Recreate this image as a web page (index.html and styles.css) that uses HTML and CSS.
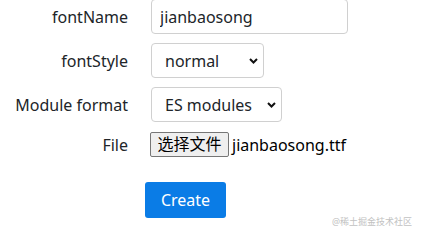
FILE: index.html
```html
<!doctype html>
<html>
	<head>
		<meta charset="UTF-8">
		<title>Font builder</title>
		<link rel="stylesheet" href="styles.css">
	</head>
<body>
	<form class="font-form">
		<div class="row">
			<label class="label">fontName</label>
			<input class="control text-input" type="text" value="jianbaosong">
		</div>
		<div class="row">
			<label class="label">fontStyle</label>
			<div class="control select style-select">
				<span>normal</span>
				<svg class="chevron" width="9" height="6" viewBox="0 0 9 6"><path d="M1 1l3.5 3.5L8 1" fill="none" stroke="#111" stroke-width="2"/></svg>
			</div>
		</div>
		<div class="row">
			<label class="label">Module format</label>
			<div class="control select module-select">
				<span>ES modules</span>
				<svg class="chevron" width="9" height="6" viewBox="0 0 9 6"><path d="M1 1l3.5 3.5L8 1" fill="none" stroke="#111" stroke-width="2"/></svg>
			</div>
		</div>
		<div class="row file-row">
			<label class="label">File</label>
			<div class="file">
				<span class="file-btn">选择文件</span>
				<span class="file-name">jianbaosong.ttf</span>
			</div>
		</div>
		<div class="actions">
			<button class="create" type="button">Create</button>
		</div>
	</form>
	<p class="watermark">@稀土掘金技术社区</p>
</body>
</html>
```

FILE: styles.css
```css
*{
	margin:0;
	padding:0;
	box-sizing:border-box;
}
body{
	background:#fff;
	color:#212529;
	font-family:"Noto Sans","Noto Sans CJK SC",sans-serif;
	font-size:16px;
	width:423px;
	height:234px;
	overflow:hidden;
	position:relative;
}
.font-form{
	margin-top:-1px;
}
.row{
	display:flex;
	align-items:center;
	height:35px;
	margin-bottom:9px;
}
.label{
	width:128px;
	margin-right:23px;
	text-align:right;
	line-height:20px;
}
.control{
	height:35px;
	border:1px solid #d0d0d0;
	border-radius:4px;
	background:#fff;
	font:inherit;
	color:#212529;
}
.text-input{
	width:197px;
	padding:0 8px;
	outline:none;
}
.select{
	display:flex;
	align-items:center;
	justify-content:space-between;
	padding:0 5px 0 13px;
}
.style-select{
	width:113px;
}
.module-select{
	width:131px;
}
.chevron{
	display:block;
	margin-top:1px;
}
.file-row{
	height:25px;
	margin-top:10px;
	margin-bottom:0;
}
.file{
	display:flex;
	align-items:center;
}
.file-btn{
	width:79px;
	height:25px;
	margin-left:-1px;
	border:1px solid #767676;
	border-radius:2px;
	background:#efefef;
	text-align:center;
	line-height:23px;
	color:#000;
}
.file-name{
	margin-left:3px;
	color:#000;
}
.actions{
	padding-left:145px;
	margin-top:25px;
}
.create{
	width:81px;
	height:36px;
	border:none;
	border-radius:3px;
	background:#0a7ce6;
	color:#fff;
	font:inherit;
}
.watermark{
	position:absolute;
	right:11px;
	bottom:6px;
	font-size:9px;
	color:#c2c2c2;
}
```
